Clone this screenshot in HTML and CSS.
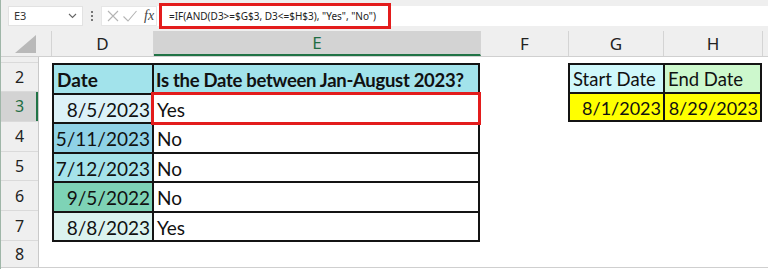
FILE: index.html
```html
<!DOCTYPE html>
<html>
<head>
<meta charset="utf-8">
<link rel="stylesheet" href="styles.css">
</head>
<body>
<div class="app">
  <div class="fbar">
    <div class="namebox">
      <span class="nb-text">E3</span>
      <svg class="chev" width="9" height="6" viewBox="0 0 9 6"><path d="M1 1 L4.5 4.5 L8 1" fill="none" stroke="#666" stroke-width="1.1"/></svg>
    </div>
    <div class="dots"><i></i><i></i><i></i></div>
    <div class="fbtns">
      <svg width="14" height="14" viewBox="0 0 14 14"><path d="M2 2 L12 12 M12 2 L2 12" stroke="#b4b4b4" stroke-width="1.1" fill="none"/></svg>
      <svg width="16" height="14" viewBox="0 0 16 14"><path d="M1.5 7.5 L6 12 L14.5 2" stroke="#b4b4b4" stroke-width="1.1" fill="none"/></svg>
      <span class="fx">fx</span>
    </div>
    <div class="finput">
      <span class="fhl">=IF(AND(D3&gt;=$G$3, D3&lt;=$H$3), "Yes", "No")</span>
    </div>
  </div>

  <div class="colhdr">
    <div class="corner"><svg width="21" height="18" viewBox="0 0 21 18"><polygon points="21,0 21,18 0,18" fill="#b9b9b9"/></svg></div>
    <div class="ch w-d">D</div>
    <div class="ch w-e sel">E</div>
    <div class="ch w-f">F</div>
    <div class="ch w-g">G</div>
    <div class="ch w-h">H</div>
    <div class="ch w-rest"></div>
  </div>

  <div class="sheet">
    <div class="rowhdrs">
      <div class="rh r-fill"></div>
      <div class="rh r-2">2</div>
      <div class="rh r-n sel">3</div>
      <div class="rh r-n">4</div>
      <div class="rh r-n">5</div>
      <div class="rh r-n">6</div>
      <div class="rh r-n">7</div>
      <div class="rh r-8">8</div>
    </div>
    <div class="cells">
      <div class="tbl-main">
        <div class="c hd">Date</div>
        <div class="c hd long">Is the Date between Jan-August 2023?</div>
        <div class="c num d3">8/5/2023</div>
        <div class="c txt active">Yes</div>
        <div class="c num d4">5/11/2023</div>
        <div class="c txt">No</div>
        <div class="c num d5">7/12/2023</div>
        <div class="c txt">No</div>
        <div class="c num d6">9/5/2022</div>
        <div class="c txt">No</div>
        <div class="c num d7">8/8/2023</div>
        <div class="c txt">Yes</div>
      </div>
      <div class="tbl-side">
        <div class="c lbl start">Start Date</div>
        <div class="c lbl end">End Date</div>
        <div class="c num yel">8/1/2023</div>
        <div class="c num yel">8/29/2023</div>
      </div>
    </div>
  </div>
</div>
</body>
</html>
```

FILE: styles.css
```css
* { box-sizing: border-box; }
html, body { margin: 0; padding: 0; background: #ffffff; }
.app {
  width: 768px;
  height: 269px;
  overflow: hidden;
  border-left: 1px solid #9fb6a8;
  font-family: "Noto Sans", "Open Sans", sans-serif;
}

/* formula bar */
.fbar {
  height: 31px;
  background: #efefef;
  display: flex;
  align-items: center;
  padding-left: 7px;
}
.namebox {
  width: 75px;
  height: 20px;
  background: #fff;
  border: 1px solid #e2e2e2;
  display: flex;
  align-items: center;
  justify-content: space-between;
  padding: 0 5px 0 5px;
}
.nb-text { font-size: 11px; color: #333; }
.chev { margin-top: 1px; }
.dots {
  width: 18px;
  display: flex;
  flex-direction: column;
  align-items: center;
  gap: 2px;
}
.dots i { display: block; width: 2px; height: 2px; background: #777; }
.fbtns {
  width: 56px;
  height: 20px;
  background: #fff;
  border: 1px solid #e6e6e6;
  display: flex;
  align-items: center;
  gap: 2px;
  padding-left: 4px;
}
.fx {
  font-family: "Liberation Serif", serif;
  font-style: italic;
  font-size: 14px;
  color: #444;
  margin-left: 4px;
}
.finput {
  flex: 1;
  height: 20px;
  background: #fff;
  display: flex;
  align-items: center;
  padding-left: 2px;
}
.fhl {
  display: flex;
  align-items: center;
  height: 26px;
  width: 232px;
  border: 3px solid #e31c1c;
  padding-left: 7px;
  font-size: 10px;
  color: #222;
  white-space: nowrap;
}

/* column headers */
.colhdr {
  height: 26px;
  display: flex;
  background: #efefef;
  border-bottom: 1px solid #d0d0d0;
}
.corner {
  width: 51px;
  border-right: 1px solid #d4d4d4;
  display: flex;
  align-items: flex-end;
  justify-content: flex-end;
  padding: 0 15px 3px 0;
}
.ch {
  display: flex;
  align-items: center;
  justify-content: center;
  border-right: 1px solid #d4d4d4;
  font-size: 17px;
  color: #222;
}
.ch.sel {
  background: #d3d3d3;
  color: #1f6e43;
  border-bottom: 2px solid #217346;
}
.w-d { width: 102px; }
.w-e { width: 327px; }
.w-f { width: 88px; }
.w-g { width: 95px; }
.w-h { width: 99px; }
.w-rest { flex: 1; border-right: none; }

/* sheet */
.sheet {
  display: flex;
  height: 211px;
  border-bottom: 1px solid #cfcfcf;
}
.rowhdrs {
  width: 38px;
  background: #efefef;
  border-right: 1px solid #c9c9c9;
  display: flex;
  flex-direction: column;
}
.rh {
  display: flex;
  align-items: center;
  justify-content: center;
  font-size: 16px;
  color: #222;
  border-bottom: 1px solid #dadada;
}
.r-fill { height: 6px; }
.r-2 { height: 29px; }
.r-n { height: 30px; }
.r-8 { height: 26px; border-bottom: none; }
.rh.sel {
  background: #d3d3d3;
  color: #1f6e43;
  box-shadow: inset -2px 0 0 #217346;
}

.cells {
  display: grid;
  grid-template-columns: 13px 101px 327px 88px 95px 99px;
  grid-template-rows: 6px 29px 30px 30px 30px 30px 30px 26px;
}
.tbl-main {
  grid-column: 2 / 4;
  grid-row: 2 / 8;
  display: grid;
  grid-template-columns: 98px minmax(0, 1fr);
  grid-template-rows: repeat(6, minmax(0, 1fr));
  gap: 2px;
  padding: 2px;
  background: #141414;
}
.tbl-side {
  grid-column: 5 / 7;
  grid-row: 2 / 4;
  display: grid;
  grid-template-columns: 93px minmax(0, 1fr);
  grid-template-rows: repeat(2, minmax(0, 1fr));
  gap: 2px;
  padding: 2px;
  background: #141414;
}
.c {
  display: flex;
  align-items: center;
  min-width: 0;
  font-family: Lato, "Liberation Sans", sans-serif;
  font-size: 19px;
  color: #111;
  background: #fff;
  padding: 2px 2px 0 3px;
  white-space: nowrap;
}
.hd { background: #a2e3eb; font-weight: 700; }
.long { font-size: 18.5px; letter-spacing: -0.3px; padding-left: 2px; }
.num { justify-content: flex-end; padding-left: 0; }
.txt { padding-left: 3px; }
.active {
  position: relative;
  z-index: 1;
  outline: 3px solid #e31c1c;
  outline-offset: 0;
}
.d3 { background: #dcf2f8; }
.d4 { background: #8fd2e6; }
.d5 { background: #a5e3ea; }
.d6 { background: #7ed3b6; }
.d7 { background: #dbf3ef; }
.start { background: #cff8fb; }
.end { background: #cdf8cd; }
.yel { background: #ffff00; font-size: 18px; }
.lbl { padding-left: 3px; font-size: 18.5px; }
```
